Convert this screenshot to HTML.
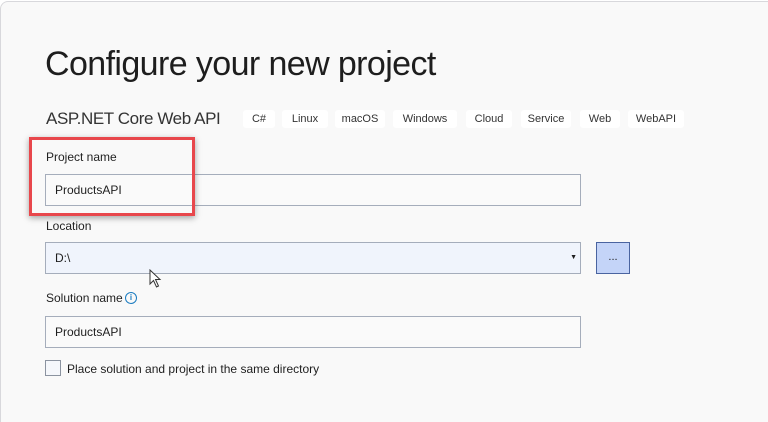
<!DOCTYPE html>
<html><head><style>
body{margin:0;width:768px;height:401px;background:#fff;overflow:hidden;font-family:"Liberation Sans",sans-serif;color:#1e1e1e;position:relative}
.pane{position:absolute;left:0;top:1px;width:780px;height:420px;background:#f9f9f9;border-top:1px solid #d8d8dc;border-left:1px solid #d8d8dc;border-radius:8px 0 0 0}
.a{position:absolute;white-space:nowrap}
.tag{position:absolute;top:110px;height:18px;background:#fff;border-radius:3px;font-size:11px;line-height:18px;text-align:center;color:#333}
.inp{position:absolute;left:45px;width:534px;height:30px;border:1px solid #a5adbb;background:#fafafa;font-size:12px;line-height:30px;box-sizing:content-box}
.lbl{position:absolute;left:46px;font-size:12px;color:#222}
</style></head><body>
<div class="pane"></div>
<div class="a" style="left:45px;top:45px;font-size:34px;color:#1e1e1e;letter-spacing:-0.6px">Configure your new project</div>
<div class="a" style="left:46px;top:109px;font-size:17px;color:#333;letter-spacing:-0.4px">ASP.NET Core Web API</div>
<div class="tag" style="left:243px;width:32px">C#</div>
<div class="tag" style="left:282px;width:46px">Linux</div>
<div class="tag" style="left:335px;width:50px">macOS</div>
<div class="tag" style="left:393px;width:64px">Windows</div>
<div class="tag" style="left:466px;width:46px">Cloud</div>
<div class="tag" style="left:521px;width:50px">Service</div>
<div class="tag" style="left:580px;width:40px">Web</div>
<div class="tag" style="left:628px;width:56px">WebAPI</div>
<div class="lbl" style="top:150px">Project name</div>
<div class="inp" style="top:174px"><span style="margin-left:9px">ProductsAPI</span></div>
<div style="position:absolute;left:29px;top:137px;width:160px;height:73px;border:3px solid #e8474c;box-shadow:0 2px 6px rgba(0,0,0,.35)"></div>
<div class="lbl" style="top:219px">Location</div>
<div class="inp" style="top:242px;background:#f0f4fc"><span style="margin-left:9px">D:\</span><span style="position:absolute;right:3px;top:0;font-size:7px">▼</span></div>
<div style="position:absolute;left:596px;top:242px;width:32px;height:30px;background:#c4d4f8;border:1px solid #4a64a0;font-size:11px;text-align:center;line-height:28px">...</div>
<svg style="position:absolute;left:149px;top:269px" width="14" height="20" viewBox="0 0 14 20"><path d="M1 1 L1 15 L4.5 11.5 L7.5 18 L9.5 17 L6.5 10.5 L11 10.5 Z" fill="#fff" stroke="#333" stroke-width="1"/></svg>
<div class="lbl" style="top:291px">Solution name</div>
<div style="position:absolute;left:125px;top:292px;width:10px;height:10px;border:1.5px solid #1a7bc0;border-radius:50%;font-size:8px;color:#1a7bc0;text-align:center;line-height:10px;font-weight:bold">i</div>
<div class="inp" style="top:316px"><span style="margin-left:9px">ProductsAPI</span></div>
<div style="position:absolute;left:45px;top:360px;width:14px;height:14px;border:1px solid #8b93a0;background:#f5f7fb"></div>
<div class="a" style="left:67px;top:362px;font-size:12px">Place solution and project in the same directory</div>
</body></html>
